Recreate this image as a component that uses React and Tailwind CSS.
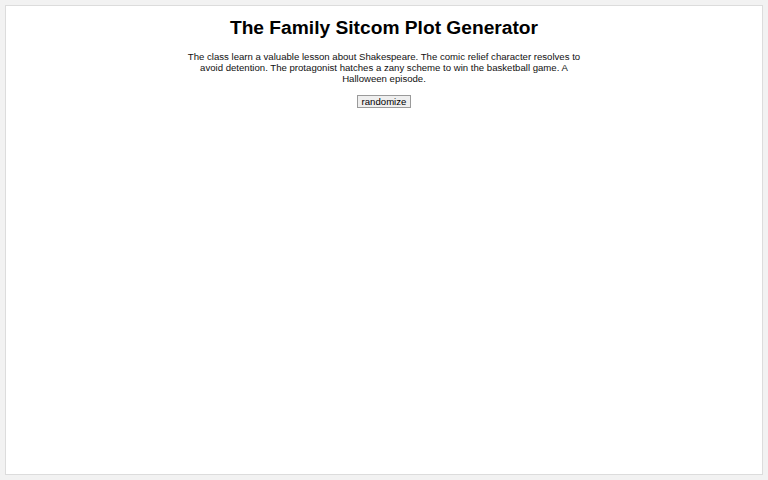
export default function App() {
  return (
    <div className="min-h-[480px] bg-[#f2f2f2] p-[5px]" style={{ fontFamily: '"Liberation Sans", Arial, sans-serif' }}>
      <div className="h-[470px] bg-white border border-[#dcdcdc] flex flex-col items-center">
        <h1 className="mt-[10px] text-[19.2px] leading-[24px] font-bold text-black">The Family Sitcom Plot Generator</h1>
        <p className="mt-[11px] w-[400px] text-center text-[9.6px] leading-[11px] text-[#111]">
          The class learn a valuable lesson about Shakespeare. The comic relief character resolves to avoid detention. The protagonist hatches a zany scheme to win the basketball game. A Halloween episode.
        </p>
        <button className="mt-[11px] px-[4px] h-[13px] text-[9.6px] leading-[11px] text-black bg-[#efefef] border border-[#9a9a9a]">randomize</button>
      </div>
    </div>
  );
}
